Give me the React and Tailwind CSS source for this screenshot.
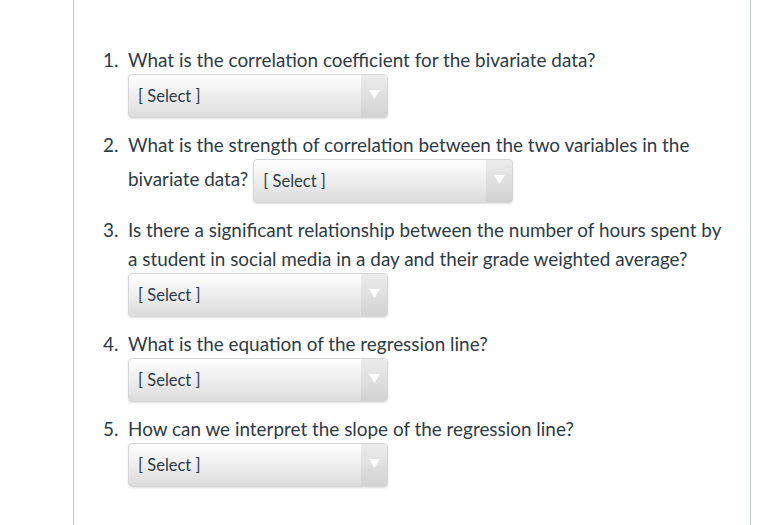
import React from 'react';

const SelectBox = ({ inline = false }) => (
    <span
        className={`${inline ? 'inline-flex align-middle ml-[5px]' : 'flex'} w-[260px] h-[44px] rounded-[4px] border border-[#d3d6d9] bg-gradient-to-b from-[#ffffff] to-[#dcdcdc] shadow-[0_1px_2px_rgba(0,0,0,0.12)] overflow-hidden`}
    >
        <span className="flex-1 flex items-center pl-[9px] text-[16.5px] text-[#2d3b45]">[ Select ]</span>
        <span className="w-[26px] flex items-start justify-center pt-[15px] bg-gradient-to-b from-[#ececec] to-[#d2d2d2]">
            <svg width="11" height="9" viewBox="0 0 11 9">
                <polygon points="0,0 11,0 5.5,9" fill="#ffffff" />
            </svg>
        </span>
    </span>
);

const questions = [
    { n: 1, text: 'What is the correlation coefficient for the bivariate data?' },
    { n: 2, text: 'What is the strength of correlation between the two variables in the bivariate data?', inline: true },
    { n: 3, text: 'Is there a significant relationship between the number of hours spent by a student in social media in a day and their grade weighted average?' },
    { n: 4, text: 'What is the equation of the regression line?' },
    { n: 5, text: 'How can we interpret the slope of the regression line?' }
];

export default function App() {
    return (
        <div className="bg-white h-[525px] overflow-hidden" style={{ fontFamily: 'Lato, "Open Sans", sans-serif' }}>
            <div className="ml-[73px] w-[678px] h-full border-x border-[#c7cdd1] pt-[45px] pl-[29px] pr-[23px]">
                <div className="flex flex-col gap-[12px]">
                    {questions.map(q => (
                        <div key={q.n} className="flex text-[18.9px] leading-[29px] text-[#2d3b45]">
                            <span className="w-[25px] shrink-0">{q.n}.</span>
                            <div className="flex-1">
                                {q.inline ? (
                                    <p>
                                        {q.text}<SelectBox inline />
                                    </p>
                                ) : (
                                    <>
                                        <p>{q.text}</p>
                                        <SelectBox />
                                    </>
                                )}
                            </div>
                        </div>
                    ))}
                </div>
            </div>
        </div>
    );
}
